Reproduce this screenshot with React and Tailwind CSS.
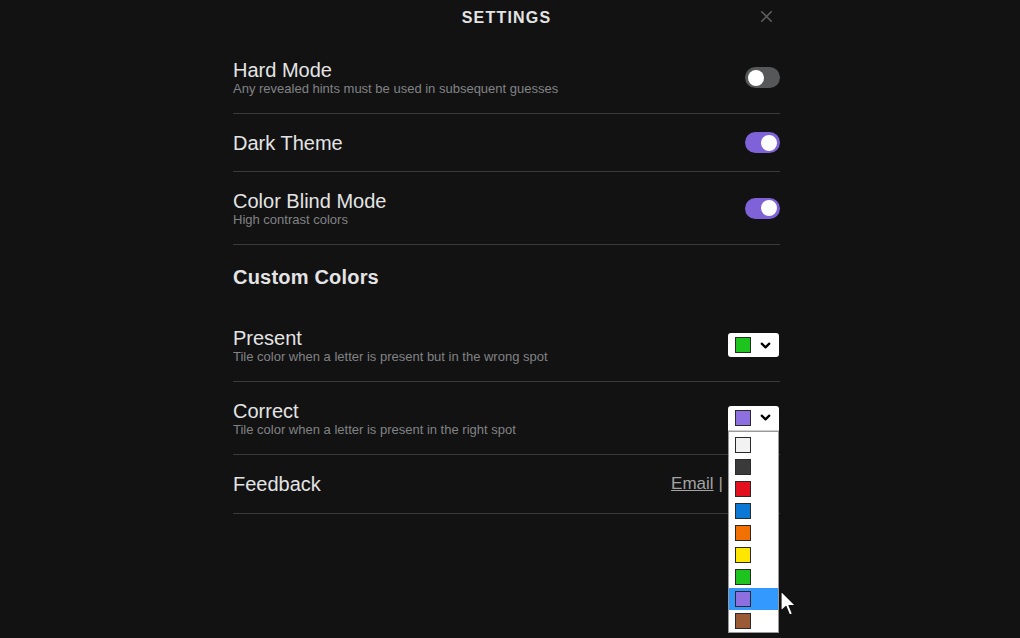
import { X, ChevronDown } from 'lucide-react';

const options = [
    { id: 'white', color: '#f2f2f2' },
    { id: 'dark', color: '#3a3a3a' },
    { id: 'red', color: '#e3101d' },
    { id: 'blue', color: '#0b78d6' },
    { id: 'orange', color: '#f27000' },
    { id: 'yellow', color: '#ffe600' },
    { id: 'green', color: '#1ec41e' },
    { id: 'purple', color: '#8d6fe0' },
    { id: 'brown', color: '#9a5a36' }
];

function Toggle({ on }) {
    return (
        <div
            className={
                on
                    ? 'w-[35px] h-[21px] rounded-full bg-[#7f62d8] flex items-center justify-end px-[3px]'
                    : 'w-[35px] h-[21px] rounded-full bg-[#565758] flex items-center justify-start px-[3px]'
            }
        >
            <div className="w-[16px] h-[16px] rounded-full bg-white" />
        </div>
    );
}

function Swatch({ color }) {
    return <div className="w-[16px] h-[16px] border border-[#2a2a2a]" style={{ backgroundColor: color }} />;
}

function ColorSelect({ color, open }) {
    return (
        <div className="relative mr-[1px]">
            <div
                className={
                    open
                        ? 'w-[51px] h-[25px] bg-white rounded-t-[3px] flex items-center justify-between pl-[7px] pr-[6px] border-b border-[#cfcfcf]'
                        : 'w-[51px] h-[24px] bg-white rounded-[3px] flex items-center justify-between pl-[7px] pr-[6px]'
                }
            >
                <Swatch color={color} />
                <ChevronDown size={15} strokeWidth={3.5} className="text-black" />
            </div>
            {open && (
                <div className="absolute top-[25px] right-0 w-[51px] h-[202px] bg-white border border-[#9a9a9a] pt-[2px] z-10">
                    {options.map((opt) => (
                        <div
                            key={opt.id}
                            className={
                                opt.id === 'purple'
                                    ? 'h-[22px] flex items-center pl-[6px] bg-[#3399ff]'
                                    : 'h-[22px] flex items-center pl-[6px]'
                            }
                        >
                            <Swatch color={opt.color} />
                        </div>
                    ))}
                </div>
            )}
        </div>
    );
}

function RowText({ title, sub }) {
    return (
        <div className="flex flex-col">
            <span className="text-[20px] leading-[22px] text-[#e4e4e4]">{title}</span>
            {sub && <span className="text-[13px] leading-[15px] text-[#818384]">{sub}</span>}
        </div>
    );
}

export default function App() {
    return (
        <div className="relative min-h-screen h-[638px] bg-[#121213] font-['Liberation_Sans',Arial,sans-serif] overflow-hidden">
            <div className="ml-[233px] w-[547px]">
                {/* Header */}
                <div className="relative h-[44px] flex justify-center pt-[9px]">
                    <h1 className="text-[16px] leading-[18px] font-bold tracking-[1.2px] text-[#e4e4e4]">SETTINGS</h1>
                    <X size={19} strokeWidth={2} className="absolute right-[4px] top-[7px] text-[#5f6061]" />
                </div>

                <div className="h-[70px] flex items-center justify-between border-b border-[#3a3a3c] pb-[2px]">
                    <RowText title="Hard Mode" sub="Any revealed hints must be used in subsequent guesses" />
                    <Toggle on={false} />
                </div>

                <div className="h-[58px] flex items-center justify-between border-b border-[#3a3a3c]">
                    <RowText title="Dark Theme" />
                    <Toggle on />
                </div>

                <div className="h-[73px] flex items-center justify-between border-b border-[#3a3a3c]">
                    <RowText title="Color Blind Mode" sub="High contrast colors" />
                    <Toggle on />
                </div>

                <div className="h-[64px] flex items-center">
                    <h2 className="text-[20px] leading-[22px] font-bold tracking-[0.2px] text-[#e4e4e4]">Custom Colors</h2>
                </div>

                <div className="h-[73px] flex items-center justify-between border-b border-[#3a3a3c]">
                    <RowText title="Present" sub="Tile color when a letter is present but in the wrong spot" />
                    <ColorSelect color="#1ec41e" />
                </div>

                <div className="relative z-10 h-[73px] flex items-center justify-between border-b border-[#3a3a3c]">
                    <RowText title="Correct" sub="Tile color when a letter is present in the right spot" />
                    <ColorSelect color="#8d6fe0" open />
                </div>

                <div className="h-[59px] flex items-center justify-between border-b border-[#3a3a3c]">
                    <RowText title="Feedback" />
                    <div className="text-[17px] text-[#a3a3a3] flex items-center gap-[5px]">
                        <span className="underline">Email</span>
                        <span>|</span>
                        <span className="w-[52px] overflow-hidden whitespace-nowrap underline">Twitter</span>
                    </div>
                </div>
            </div>

            {/* mouse pointer */}
            <svg className="absolute left-[780px] top-[590px] z-20" width="18" height="28" viewBox="0 0 18 28">
                <path d="M1 1 L1 21 L6 16.5 L9.5 25 L12.5 23.8 L9 15.5 L15.5 15.5 Z" fill="#ffffff" stroke="#111111" strokeWidth="1.2" strokeLinejoin="round" />
            </svg>
        </div>
    );
}
